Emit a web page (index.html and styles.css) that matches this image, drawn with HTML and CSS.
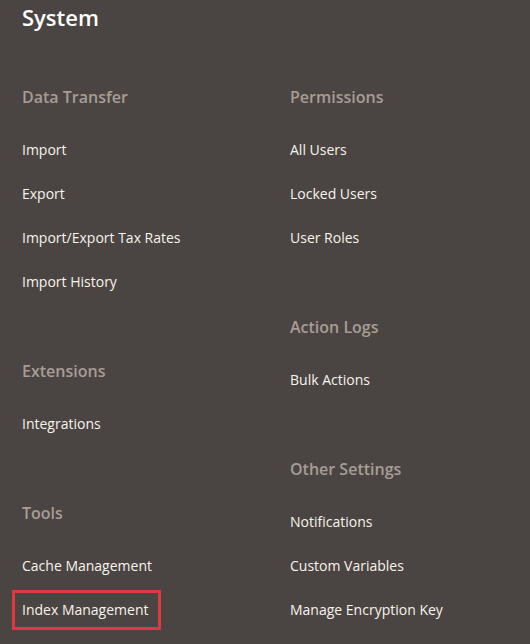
FILE: index.html
```html
<!DOCTYPE html>
<html lang="en">
<head>
<meta charset="utf-8">
<title>System</title>
<link rel="stylesheet" href="styles.css">
</head>
<body>
<div class="menu">
  <h1 class="title">System</h1>
  <div class="columns">
    <div class="col">
      <div class="group">
        <h2 class="group-title">Data Transfer</h2>
        <ul class="items">
          <li class="item">Import</li>
          <li class="item">Export</li>
          <li class="item">Import/Export Tax Rates</li>
          <li class="item">Import History</li>
        </ul>
      </div>
      <div class="group">
        <h2 class="group-title">Extensions</h2>
        <ul class="items">
          <li class="item">Integrations</li>
        </ul>
      </div>
      <div class="group">
        <h2 class="group-title">Tools</h2>
        <ul class="items">
          <li class="item">Cache Management</li>
          <li class="item"><span class="highlight">Index Management</span></li>
        </ul>
      </div>
    </div>
    <div class="col">
      <div class="group">
        <h2 class="group-title">Permissions</h2>
        <ul class="items">
          <li class="item">All Users</li>
          <li class="item">Locked Users</li>
          <li class="item">User Roles</li>
        </ul>
      </div>
      <div class="group">
        <h2 class="group-title">Action Logs</h2>
        <ul class="items">
          <li class="item">Bulk Actions</li>
        </ul>
      </div>
      <div class="group">
        <h2 class="group-title">Other Settings</h2>
        <ul class="items">
          <li class="item">Notifications</li>
          <li class="item">Custom Variables</li>
          <li class="item">Manage Encryption Key</li>
        </ul>
      </div>
    </div>
  </div>
</div>
</body>
</html>
```

FILE: styles.css
```css
html, body {
  margin: 0;
  padding: 0;
  background: #4a4542;
  height: 100%;
  overflow: hidden;
}

.menu {
  font-family: "Open Sans", "Noto Sans", "Liberation Sans", sans-serif;
  padding: 4px 0 0 22px;
  color: #f7f3eb;
}

.title {
  margin: 0;
  font-size: 22px;
  font-weight: 600;
  line-height: 26px;
  color: #ffffff;
}

.columns {
  display: grid;
  grid-template-columns: 268px 1fr;
  margin-top: 52px;
}

.col {
  display: flex;
  flex-direction: column;
  gap: 52px;
}

.group-title {
  margin: 0 0 16px;
  font-size: 16px;
  font-weight: 600;
  line-height: 30px;
  color: #a79d95;
}

.items {
  list-style: none;
  margin: 0;
  padding: 0;
}

.item {
  font-size: 14px;
  line-height: 44px;
  height: 44px;
  color: #f7f3eb;
}

.highlight {
  position: relative;
}

.highlight::after {
  content: "";
  position: absolute;
  left: -10px;
  right: -12px;
  top: -10px;
  bottom: -11px;
  border: 3px solid #e0393d;
}
```
